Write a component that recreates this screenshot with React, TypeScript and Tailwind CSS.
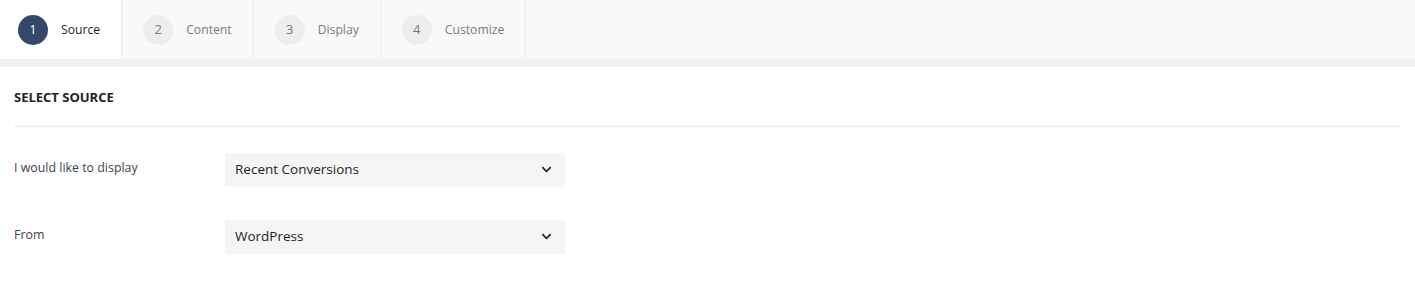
import { ChevronDown } from "lucide-react";

const steps = [
  { n: 1, label: "Source", active: true },
  { n: 2, label: "Content" },
  { n: 3, label: "Display" },
  { n: 4, label: "Customize" },
];

function Step({ n, label, active }: { n: number; label: string; active?: boolean }) {
  return (
    <div
      className={`flex h-full items-center gap-[13px] border-r border-[#ececec] pl-[21px] pr-[21px] first:pl-[18px] ${
        active ? "bg-white" : ""
      }`}
    >
      <span
        className={`flex size-[30px] items-center justify-center rounded-full text-[13px] ${
          active ? "bg-[#34496a] text-white" : "bg-[#ededed] text-[#7a7a7a]"
        }`}
      >
        {n}
      </span>
      <span className={`pt-px text-[12.2px] ${active ? "text-[#1d2327]" : "text-[#7a7a7a]"}`}>{label}</span>
    </div>
  );
}

function Field({ label, value }: { label: string; value: string }) {
  return (
    <div className="flex items-start">
      <div className="w-[211px] pt-[6px] text-[12.4px] text-[#3c434a]">{label}</div>
      <div className="flex h-[34px] w-[340px] items-center justify-between bg-[#f5f5f5] pl-[10px] pr-[11px] text-[13.5px] text-[#1d2327]">
        <span>{value}</span>
        <ChevronDown className="size-[15px] text-[#1d2327]" strokeWidth={2.6} />
      </div>
    </div>
  );
}

export default function App() {
  return (
    <div className="h-[298px] bg-white font-['Open_Sans',sans-serif]">
      <nav className="flex h-[59px] bg-[#f9f9f9]">
        {steps.map((s) => (
          <Step key={s.n} {...s} />
        ))}
      </nav>
      <div className="h-2 bg-[#f1f1f1]" />
      <section className="px-[14px]">
        <h2 className="pt-[21px] pb-[18px] text-[13px] font-bold uppercase text-[#1d2327]">Select Source</h2>
        <div className="border-t border-[#ebebeb]" />
        <div className="flex flex-col gap-[33px] pt-[26px]">
          <Field label="I would like to display" value="Recent Conversions" />
          <Field label="From" value="WordPress" />
        </div>
      </section>
    </div>
  );
}
